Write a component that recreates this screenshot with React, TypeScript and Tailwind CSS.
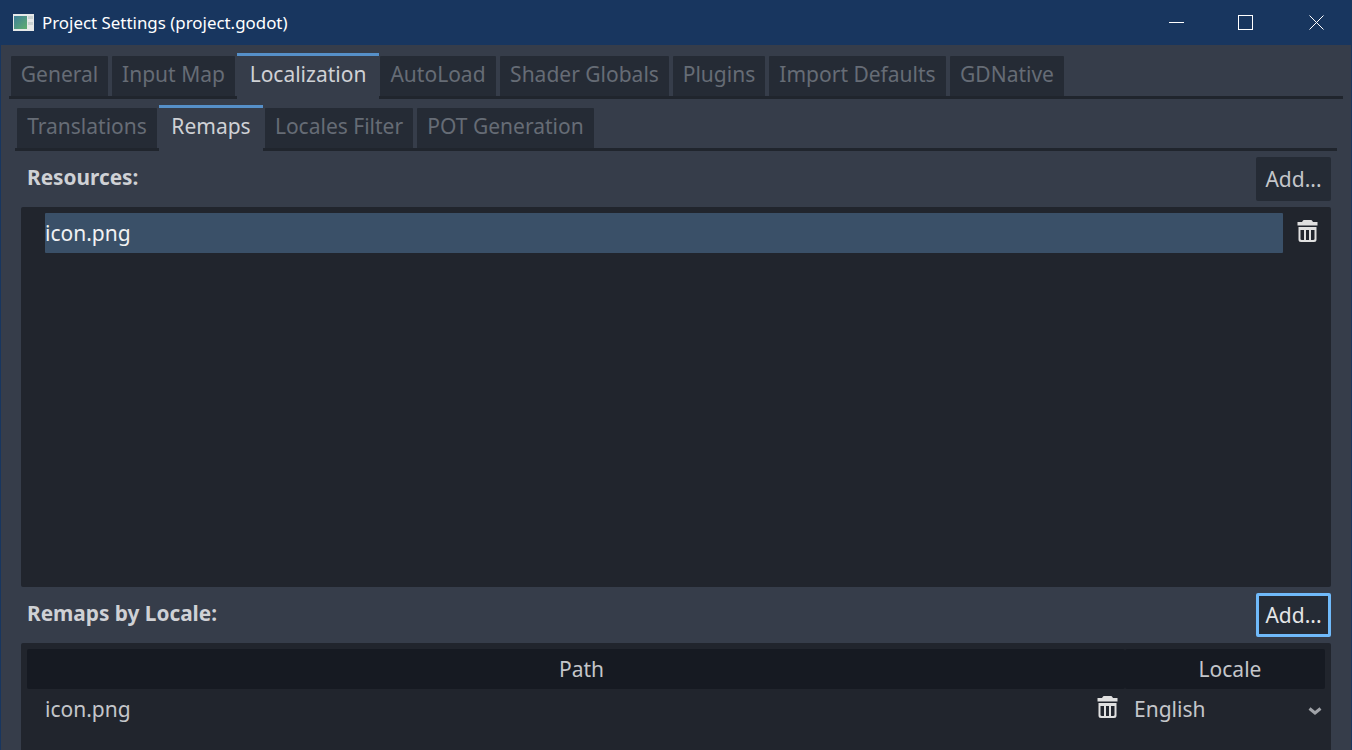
const font = { fontFamily: '"Noto Sans", sans-serif' };

function Trash({ className }: { className?: string }) {
  return (
    <svg viewBox="0 0 21 22" width="21" height="22" className={className}>
      <path d="M6 0.6 Q6 0 7 0 H14 Q15 0 15 0.6 L16 2 H20.5 V5.5 H0.5 V2 H5 Z" fill="#e0e0e0" />
      <path
        fillRule="evenodd"
        d="M1.5 7 H19.5 V19.5 Q19.5 22 17 22 H4 Q1.5 22 1.5 19.5 Z M3.5 10 V19 Q3.5 20 5 20 H7 V10 Z M9 10 V20 H12 V10 Z M14 10 V20 H16 Q17.5 20 17.5 19 V10 Z"
        fill="#e0e0e0"
      />
    </svg>
  );
}

function Tab({ label, width, active, ml }: { label: string; width: string; active?: boolean; ml: string }) {
  if (active) {
    return (
      <div
        className={`${width} ${ml} h-[43px] bg-[#363d4a] border-t-[3px] border-[#5690c9] pb-[4px] flex items-center justify-center text-[#cfd1d5]`}
      >
        {label}
      </div>
    );
  }
  return (
    <div className={`${width} ${ml} h-[40px] bg-[#252b35] rounded-t-[1px] pb-[4px] flex items-center justify-center text-[#666c75]`}>
      {label}
    </div>
  );
}

export default function App() {
  return (
    <div style={font} className="w-[1352px] h-[750px] overflow-hidden flex flex-col bg-[#18365f] text-[21px] leading-none">
      <div className="h-[45px] shrink-0 flex items-center text-white">
        <svg viewBox="0 0 21 17" width="21" height="17" className="ml-[13px] mb-[1px]">
          <rect width="21" height="17" fill="#e6e9e9" />
          <defs>
            <linearGradient id="g" x1="0" y1="0" x2="1" y2="1">
              <stop offset="0" stopColor="#3f7f9a" />
              <stop offset="1" stopColor="#5fae6e" />
            </linearGradient>
          </defs>
          <rect x="1" y="2" width="13" height="13" fill="url(#g)" />
          <rect x="15" y="2" width="5" height="3" fill="#c9d2d2" />
          <rect x="15" y="8" width="5" height="3" fill="#c9d2d2" />
        </svg>
        <span className="ml-[8px] text-[16.9px] pt-[1px]">Project Settings (project.godot)</span>
        <div className="ml-auto flex items-center">
          <svg viewBox="0 0 15 15" width="15" height="15" className="mr-[54px]">
            <path d="M0 7.5 H15" stroke="#fff" strokeWidth="1" />
          </svg>
          <svg viewBox="0 0 15 15" width="15" height="15" className="mr-[56px]">
            <rect x="0.5" y="0.5" width="14" height="14" fill="none" stroke="#fff" strokeWidth="1" />
          </svg>
          <svg viewBox="0 0 15 15" width="15" height="15" className="mr-[28px]">
            <path d="M0.5 0.5 L14.5 14.5 M14.5 0.5 L0.5 14.5" stroke="#fff" strokeWidth="1" />
          </svg>
        </div>
      </div>

      <div className="flex-1 min-h-0 mx-[1px] bg-[#363d4a] flex flex-col">
        {/* main tabs */}
        <div className="mt-[8px] mx-[8px] flex items-end h-[43px] pl-[2px]">
          <Tab label="General" width="w-[97px]" ml="ml-0" />
          <Tab label="Input Map" width="w-[123px]" ml="ml-[4px]" />
          <Tab label="Localization" width="w-[142px]" ml="ml-[2px]" active />
          <Tab label="AutoLoad" width="w-[116px]" ml="ml-[1px]" />
          <Tab label="Shader Globals" width="w-[169px]" ml="ml-[4px]" />
          <Tab label="Plugins" width="w-[92px]" ml="ml-[4px]" />
          <Tab label="Import Defaults" width="w-[177px]" ml="ml-[4px]" />
          <Tab label="GDNative" width="w-[114px]" ml="ml-[4px]" />
        </div>
        <div className="mx-[8px] h-[3px] bg-[#20252d] flex">
          <div className="ml-[228px] w-[142px] bg-[#363d4a]" />
        </div>

        {/* sub tabs */}
        <div className="mt-[6px] mx-[14px] flex items-end h-[43px] pl-[2px]">
          <Tab label="Translations" width="w-[140px]" ml="ml-0" />
          <Tab label="Remaps" width="w-[104px]" ml="ml-[2px]" active />
          <Tab label="Locales Filter" width="w-[148px]" ml="ml-[2px]" />
          <Tab label="POT Generation" width="w-[177px]" ml="ml-[4px]" />
        </div>
        <div className="mx-[14px] h-[3px] bg-[#20252d] flex">
          <div className="ml-[144px] w-[104px] bg-[#363d4a]" />
        </div>

        {/* content */}
        <div className="flex-1 min-h-0 mt-[6px] ml-[20px] mr-[20px] flex flex-col">
          <div className="h-[44px] shrink-0 flex items-start">
            <span className="ml-[6px] mt-[10px] font-bold text-[20.8px] text-[#cfd1d5]">Resources:</span>
            <button className="ml-auto w-[75px] h-[44px] bg-[#252b35] rounded-[2px] text-[#c4c6ca] flex items-center justify-center">
              Add...
            </button>
          </div>
          <div className="mt-[6px] h-[380px] shrink-0 bg-[#21252d] rounded-[2px] pt-[6px] pl-[24px] pr-[13px] flex items-start">
            <div className="flex-1 h-[40px] bg-[#3a5068] rounded-[1px] flex items-center text-[#f1f2f3]">icon.png</div>
            <Trash className="ml-[14px] mt-[7px]" />
          </div>

          <div className="mt-[6px] h-[44px] shrink-0 flex items-start">
            <span className="ml-[6px] mt-[10px] font-bold text-[20.8px] text-[#cfd1d5]">Remaps by Locale:</span>
            <button className="ml-auto w-[75px] h-[44px] bg-[#252b35] rounded-[2px] border-[3px] border-[#70bafa] text-[#e4e5e7] flex items-center justify-center">
              Add...
            </button>
          </div>
          <div className="mt-[6px] h-[120px] shrink-0 bg-[#21252d] rounded-[2px] pt-[6px] px-[6px]">
            <div className="flex h-[40px] text-[#c4c6ca]">
              <div className="w-[1098px] pl-[11px] bg-[#161a22] rounded-[2px] flex items-center justify-center">Path</div>
              <div className="w-[200px] pl-[10px] bg-[#161a22] rounded-[2px] flex items-center justify-center">Locale</div>
            </div>
            <div className="flex items-center h-[40px] text-[#c4c6ca]">
              <span className="ml-[18px] flex-1">icon.png</span>
              <Trash className="mb-[5px]" />
              <div className="w-[207px] pl-[16px] flex items-center justify-between">
                <span>English</span>
                <svg viewBox="0 0 14 8" width="14" height="8" className="mr-[3px] mt-[3px]">
                  <path d="M1.5 1.5 L7 6 L12.5 1.5" fill="none" stroke="#a0a3a8" strokeWidth="3" />
                </svg>
              </div>
            </div>
          </div>
        </div>
      </div>
    </div>
  );
}
